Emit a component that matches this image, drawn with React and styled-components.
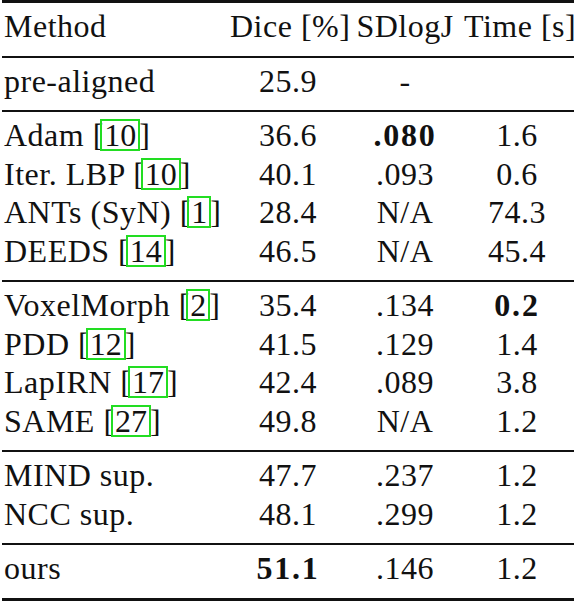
import styled, { createGlobalStyle } from 'styled-components';

const GlobalStyle = createGlobalStyle`
	html, body {
		margin: 0;
		padding: 0;
		background: #ffffff;
	}
	body {
		font-family: 'Liberation Serif', 'Times New Roman', serif;
		color: #111111;
	}
`;

const groups = [
	[{ method: 'pre-aligned', dice: '25.9', sd: '-', time: '' }],
	[
		{ method: 'Adam', cite: '10', dice: '36.6', sd: '.080', sdBold: true, time: '1.6' },
		{ method: 'Iter. LBP', cite: '10', dice: '40.1', sd: '.093', time: '0.6' },
		{ method: 'ANTs (SyN)', cite: '1', dice: '28.4', sd: 'N/A', time: '74.3' },
		{ method: 'DEEDS', cite: '14', dice: '46.5', sd: 'N/A', time: '45.4' }
	],
	[
		{ method: 'VoxelMorph', cite: '2', dice: '35.4', sd: '.134', time: '0.2', timeBold: true },
		{ method: 'PDD', cite: '12', dice: '41.5', sd: '.129', time: '1.4' },
		{ method: 'LapIRN', cite: '17', dice: '42.4', sd: '.089', time: '3.8' },
		{ method: 'SAME', cite: '27', dice: '49.8', sd: 'N/A', time: '1.2' }
	],
	[
		{ method: 'MIND sup.', dice: '47.7', sd: '.237', time: '1.2' },
		{ method: 'NCC sup.', dice: '48.1', sd: '.299', time: '1.2' }
	],
	[{ method: 'ours', dice: '51.1', diceBold: true, sd: '.146', time: '1.2' }]
];

const Cite = ({ n }) => (
	<CiteWrap>
		[<CiteBox>{n}</CiteBox>]
	</CiteWrap>
);

const App = () => {
	return (
		<>
			<GlobalStyle />
			<Table>
				<Rule $thick />
				<Section>
					<Row>
						<MethodCell>Method</MethodCell>
						<Cell>Dice [%]</Cell>
						<Cell>SDlogJ</Cell>
						<Cell>Time [s]</Cell>
					</Row>
				</Section>
				{groups.map((group, gi) => (
					<div key={gi}>
						<Rule />
						<Section>
							{group.map((r) => (
								<Row key={r.method}>
									<MethodCell>
										{r.method}
										{r.cite && (
											<>
												{' '}
												<Cite n={r.cite} />
											</>
										)}
									</MethodCell>
									<Cell $bold={r.diceBold}>{r.dice}</Cell>
									<Cell $bold={r.sdBold}>{r.sd}</Cell>
									<Cell $bold={r.timeBold}>{r.time}</Cell>
								</Row>
							))}
						</Section>
					</div>
				))}
				<Rule $thick />
			</Table>
		</>
	);
};

export default App;

const Table = styled.div`
	width: 572px;
	margin-left: 2px;
	display: flex;
	flex-direction: column;
	font-size: 32px;
	letter-spacing: 0.5px;
`;

const Rule = styled.div`
	height: ${(p) => (p.$thick ? '3px' : '2px')};
	background: #111111;
`;

const Section = styled.div`
	padding: 4px 0 10px;
`;

const Row = styled.div`
	display: grid;
	grid-template-columns: 228px 116px 118px 106px;
	height: 38.5px;
	line-height: 38.5px;
	white-space: nowrap;
`;

const Cell = styled.div`
	text-align: center;
	font-weight: ${(p) => (p.$bold ? 700 : 400)};
	letter-spacing: ${(p) => (p.$bold ? '1.8px' : '0.5px')};
`;

const MethodCell = styled.div`
	padding-left: 2px;
`;

const CiteWrap = styled.span`
	letter-spacing: 0;
`;

const CiteBox = styled.span`
	display: inline-block;
	height: 28px;
	line-height: 28px;
	margin: 0 -1px 0 -3px;
	padding: 0 2px;
	border: 2px solid #22dd22;
`;
